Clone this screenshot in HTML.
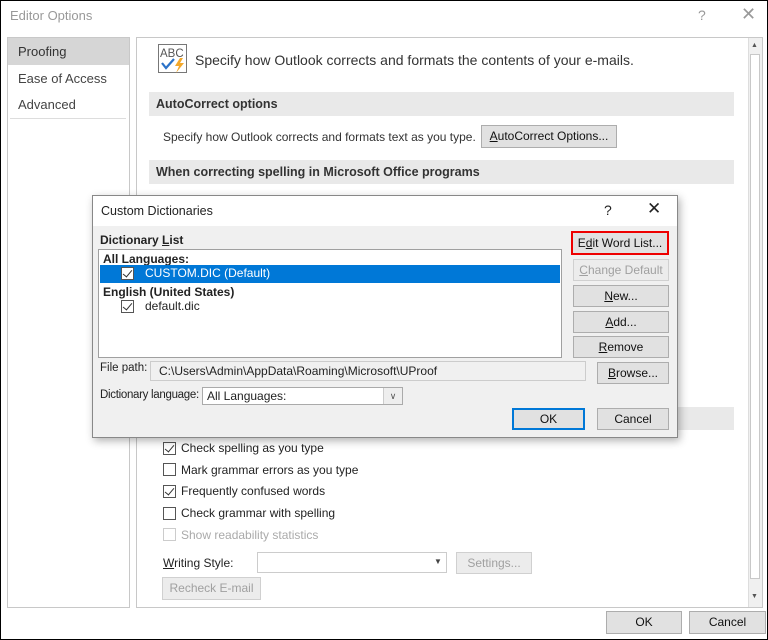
<!DOCTYPE html>
<html><head><meta charset="utf-8"><style>
*{box-sizing:border-box;margin:0;padding:0}
body{width:768px;height:640px;overflow:hidden;background:#fff;font-family:"Liberation Sans",sans-serif;font-size:12px;color:#222;position:relative}
.a{position:absolute;white-space:nowrap}
.btn{position:absolute;background:#e1e1e1;border:1px solid #adadad;text-align:center;font-size:12px;color:#111}
.dis{color:#a0a0a0;border-color:#d0d0d0;background:#ececec}
.cb{position:absolute;width:13px;height:13px;border:1px solid #555;background:#fff}
.cb.on::after{content:"";position:absolute;left:3px;top:0px;width:4px;height:8px;border:solid #333;border-width:0 1.5px 1.5px 0;transform:rotate(40deg)}
.hdr{position:absolute;background:#e9e9e9;font-weight:bold;color:#333;padding-left:7px}
u{text-decoration:underline}
</style></head><body>
<div class="a" style="left:0;top:0;width:768px;height:640px;border:1px solid #000"></div>
<div class="a" style="left:10px;top:8px;font-size:13px;color:#999">Editor Options</div>
<div class="a" style="left:698px;top:7px;font-size:14px;color:#999">?</div>
<div class="a" style="left:741px;top:4px;font-size:18px;color:#999">✕</div>

<div class="a" style="left:7px;top:37px;width:123px;height:571px;border:1px solid #c8c8c8;background:#fff"></div>
<div class="a" style="left:8px;top:38px;width:121px;height:27px;background:#d6d6d6"></div>
<div class="a" style="left:18px;top:44px;font-size:13px;color:#333">Proofing</div>
<div class="a" style="left:18px;top:71px;font-size:13px;color:#444">Ease of Access</div>
<div class="a" style="left:18px;top:97px;font-size:13px;color:#444">Advanced</div>
<div class="a" style="left:10px;top:118px;width:116px;height:1px;background:#ddd"></div>

<div class="a" style="left:136px;top:37px;width:627px;height:571px;border:1px solid #c8c8c8;background:#fff"></div>
<div class="a" style="left:748px;top:38px;width:14px;height:569px;background:#f0f0f0;border-left:1px solid #ddd"></div>
<div class="a" style="left:750px;top:54px;width:10px;height:525px;background:#fff;border:1px solid #c8c8c8"></div>
<div class="a" style="left:751px;top:42px;font-size:7px;color:#555">▲</div>
<div class="a" style="left:751px;top:593px;font-size:7px;color:#555">▼</div>

<svg class="a" style="left:158px;top:44px" width="30" height="30" viewBox="0 0 30 30">
<rect x="0.5" y="0.5" width="28" height="28" fill="#fff" stroke="#777"/>
<text x="2" y="13" font-family="Liberation Sans" font-size="11.5" fill="#555">ABC</text>
<path d="M4 19 L8 24 L16 15" stroke="#2a72c8" stroke-width="2.2" fill="none"/>
<path d="M22 14 L17 22 L21 22 L18 29 L26 19 L22 19 L25 14Z" fill="#f3a82a"/>
</svg>
<div class="a" style="left:195px;top:52px;font-size:14px;color:#333">Specify how Outlook corrects and formats the contents of your e-mails.</div>

<div class="hdr" style="left:149px;top:92px;width:585px;height:24px;line-height:24px;font-size:12.5px">AutoCorrect options</div>
<div class="a" style="left:163px;top:130px;color:#333">Specify how Outlook corrects and formats text as you type.</div>
<div class="btn" style="left:481px;top:125px;width:136px;height:23px;line-height:21px"><u>A</u>utoCorrect Options...</div>
<div class="hdr" style="left:149px;top:160px;width:585px;height:24px;line-height:24px;font-size:12.5px">When correcting spelling in Microsoft Office programs</div>
<div class="hdr" style="left:149px;top:407px;width:585px;height:23px"></div>

<div class="cb on" style="left:163px;top:442px"></div><div class="a" style="left:181px;top:441px">Check spelling as you type</div>
<div class="cb" style="left:163px;top:463px"></div><div class="a" style="left:181px;top:463px">Mark grammar errors as you type</div>
<div class="cb on" style="left:163px;top:485px"></div><div class="a" style="left:181px;top:484px">Frequently confused words</div>
<div class="cb" style="left:163px;top:507px"></div><div class="a" style="left:181px;top:506px">Check grammar with spelling</div>
<div class="cb" style="left:163px;top:528px;border-color:#ccc"></div><div class="a" style="left:181px;top:528px;color:#aaa">Show readability statistics</div>
<div class="a" style="left:163px;top:556px"><u>W</u>riting Style:</div>
<div class="a" style="left:257px;top:552px;width:190px;height:21px;border:1px solid #ccc;background:#fff"></div>
<div class="a" style="left:434px;top:557px;font-size:8px;color:#444">▼</div>
<div class="btn dis" style="left:456px;top:552px;width:76px;height:22px;line-height:20px">Settings...</div>
<div class="btn dis" style="left:162px;top:577px;width:99px;height:23px;line-height:21px">Recheck E-mail</div>

<div class="btn" style="left:606px;top:611px;width:76px;height:23px;line-height:21px">OK</div>
<div class="btn" style="left:689px;top:611px;width:77px;height:23px;line-height:21px">Cancel</div>

<!-- dialog -->
<div class="a" style="left:92px;top:195px;width:586px;height:243px;background:#f0f0f0;border:1px solid #888;box-shadow:2px 3px 8px rgba(0,0,0,.3)"></div>
<div class="a" style="left:93px;top:196px;width:584px;height:30px;background:#fff"></div>
<div class="a" style="left:101px;top:204px;font-size:12.5px;color:#222">Custom Dictionaries</div>
<div class="a" style="left:604px;top:202px;font-size:14px">?</div>
<div class="a" style="left:647px;top:199px;font-size:17px">✕</div>
<div class="a" style="left:100px;top:233px;font-weight:bold">Dictionary <u>L</u>ist</div>
<div class="a" style="left:98px;top:249px;width:464px;height:109px;background:#fff;border:1px solid #a0a0a0"></div>
<div class="a" style="left:103px;top:252px;font-weight:bold">All Languages:</div>
<div class="a" style="left:100px;top:265px;width:460px;height:18px;background:#0078d7"></div>
<div class="cb on" style="left:121px;top:267px"></div>
<div class="a" style="left:145px;top:266px;color:#fff">CUSTOM.DIC (Default)</div>
<div class="a" style="left:103px;top:285px;font-weight:bold">English (United States)</div>
<div class="cb on" style="left:121px;top:300px"></div>
<div class="a" style="left:145px;top:299px">default.dic</div>

<div class="btn" style="left:571px;top:231px;width:98px;height:24px;line-height:20px;border:2px solid #e00">E<u>d</u>it Word List...</div>
<div class="btn dis" style="left:573px;top:259px;width:96px;height:22px;line-height:20px"><u>C</u>hange Default</div>
<div class="btn" style="left:573px;top:285px;width:96px;height:22px;line-height:20px"><u>N</u>ew...</div>
<div class="btn" style="left:573px;top:311px;width:96px;height:22px;line-height:20px"><u>A</u>dd...</div>
<div class="btn" style="left:573px;top:336px;width:96px;height:22px;line-height:20px"><u>R</u>emove</div>

<div class="a" style="left:100px;top:362px;font-size:11.5px">File path:</div>
<div class="a" style="left:150px;top:361px;width:436px;height:20px;border:1px solid #ccc;background:#f0f0f0;padding:2px 0 0 8px">C:\Users\Admin\AppData\Roaming\Microsoft\UProof</div>
<div class="btn" style="left:597px;top:362px;width:72px;height:22px;line-height:20px"><u>B</u>rowse...</div>
<div class="a" style="left:100px;top:389px;font-size:11.5px;letter-spacing:-0.3px">Dictionary language:</div>
<div class="a" style="left:202px;top:387px;width:201px;height:18px;border:1px solid #aaa;background:#fff;padding:1px 0 0 4px">All Languages:</div>
<div class="a" style="left:383px;top:388px;width:19px;height:16px;background:#eee;border-left:1px solid #ccc;font-size:9px;color:#555;text-align:center;line-height:16px">∨</div>
<div class="btn" style="left:512px;top:408px;width:73px;height:22px;line-height:18px;border:2px solid #0078d7">OK</div>
<div class="btn" style="left:597px;top:408px;width:72px;height:22px;line-height:20px">Cancel</div>
</body></html>
